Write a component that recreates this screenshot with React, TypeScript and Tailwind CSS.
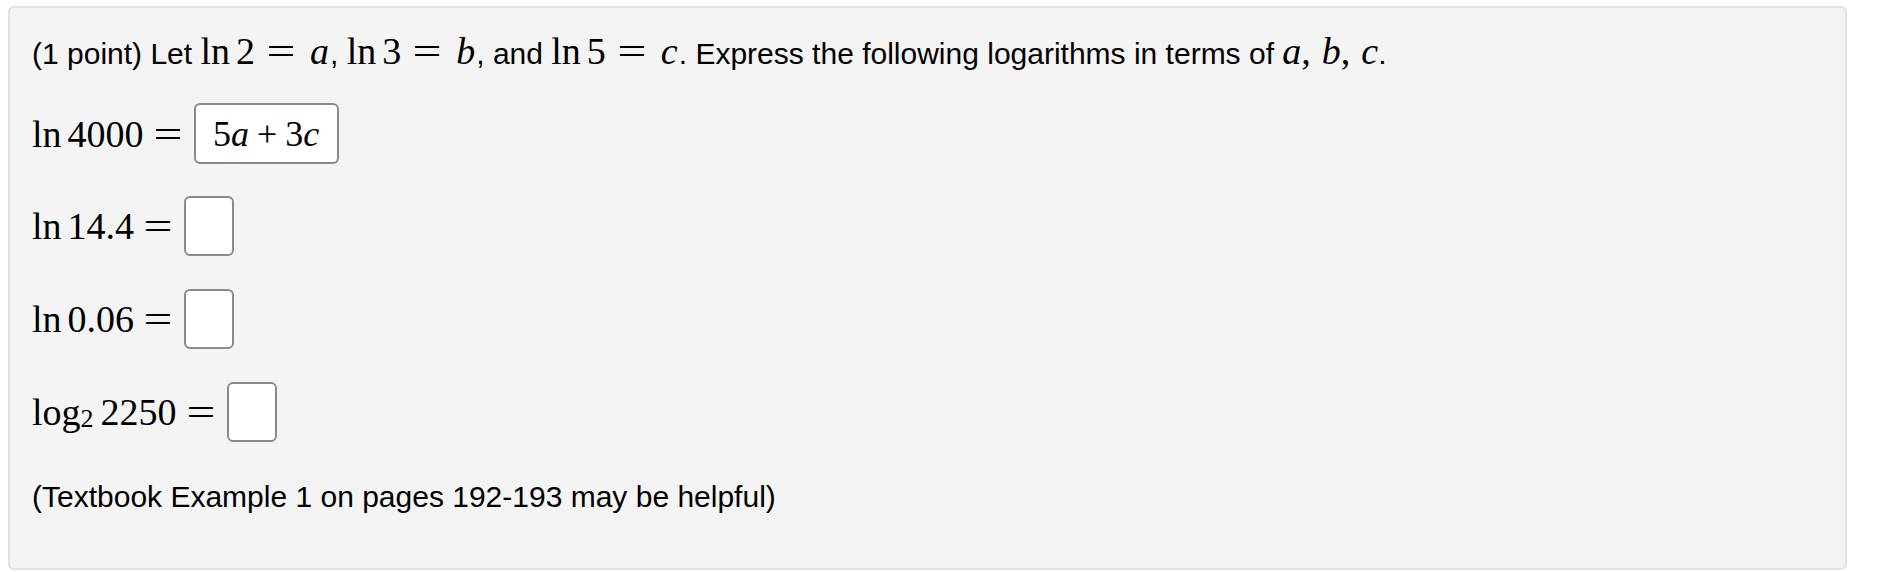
const sans = "font-['Liberation_Sans',Arial,sans-serif] text-[30px] leading-none";

function Eq({ wide }: { wide?: boolean }) {
  return (
    <span
      className={
        wide
          ? "mx-[11px] inline-block w-[30px] scale-x-[1.35] text-center"
          : "mx-[9px] inline-block w-[30px] scale-x-[1.35] text-center"
      }
    >
      =
    </span>
  );
}

function V({ children }: { children: string }) {
  return <i className="ml-[3px] mr-[1px]">{children}</i>;
}

function Ln({ arg }: { arg: string }) {
  return (
    <>
      <span>ln</span>
      <span className="ml-[6px]">{arg}</span>
    </>
  );
}

function Box({ children, wide }: { children?: React.ReactNode; wide?: boolean }) {
  return (
    <div
      className={
        wide
          ? "ml-[2px] flex h-[61px] w-[145px] items-center justify-center rounded-[6px] border-2 border-[#8a8a8a] bg-white"
          : "ml-[2px] flex h-[60px] w-[50px] items-center justify-center rounded-[6px] border-2 border-[#8a8a8a] bg-white"
      }
    >
      {children}
    </div>
  );
}

export default function App() {
  return (
    <div className="h-[572px] w-[1886px] bg-white pl-[8px] pt-[6px]">
      <div className="h-[564px] w-[1839px] rounded-[6px] border-2 border-[#e1e1e1] bg-[#f4f4f4] pl-[22px] pt-[25px] font-['Liberation_Serif',serif] text-[38px] leading-[36px] text-black">
        <div className="h-[36px] whitespace-nowrap">
          <span className={sans}>(1 point) Let </span>
          <Ln arg="2" />
          <Eq wide />
          <V>a</V>
          <span className={sans}>, </span>
          <Ln arg="3" />
          <Eq wide />
          <V>b</V>
          <span className={sans}>, and </span>
          <Ln arg="5" />
          <Eq wide />
          <V>c</V>
          <span className={sans}>. Express the following logarithms in terms of </span>
          <i>a</i>
          <span className="mr-[11px]">,</span>
          <i>b</i>
          <span className="mr-[11px]">,</span>
          <i>c</i>
          <span className={sans}>.</span>
        </div>

        <div className="mt-[34px] flex h-[61px] items-center">
          <span>
            <Ln arg="4000" />
            <Eq />
          </span>
          <Box wide>
            <span className="text-[36px]">
              5<i>a</i>
              <span className="mx-[8px]">+</span>3<i>c</i>
            </span>
          </Box>
        </div>

        <div className="mt-[32px] flex h-[60px] items-center">
          <span>
            <Ln arg="14.4" />
            <Eq />
          </span>
          <Box />
        </div>

        <div className="mt-[33px] flex h-[60px] items-center">
          <span>
            <Ln arg="0.06" />
            <Eq />
          </span>
          <Box />
        </div>

        <div className="mt-[33px] flex h-[60px] items-center">
          <span>
            log<sub className="relative top-[2px] align-baseline text-[26px]">2</sub>
            <span className="ml-[7px]">2250</span>
            <Eq />
          </span>
          <Box />
        </div>

        <div className="mt-[34px] h-[36px]">
          <span className={sans}>(Textbook Example 1 on pages 192-193 may be helpful)</span>
        </div>
      </div>
    </div>
  );
}
